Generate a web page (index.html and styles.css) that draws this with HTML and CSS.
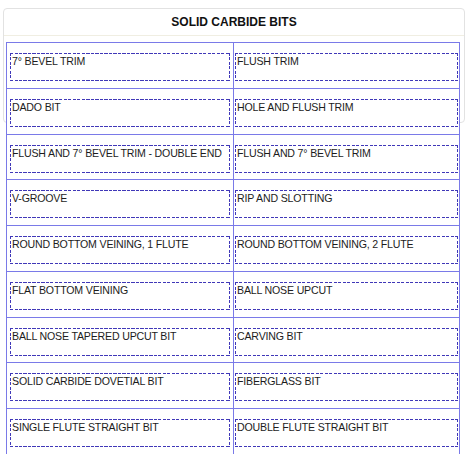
FILE: index.html
```html
<!DOCTYPE html>
<html>
<head>
<meta charset="utf-8">
<link rel="stylesheet" href="styles.css">
</head>
<body>
<div class="card">
  <div class="card-header">SOLID CARBIDE BITS</div>
  <div class="grid">
    <div class="cell left"><div class="box">7° BEVEL TRIM</div></div>
    <div class="cell right"><div class="box">FLUSH TRIM</div></div>
    <div class="cell left"><div class="box">DADO BIT</div></div>
    <div class="cell right"><div class="box">HOLE AND FLUSH TRIM</div></div>
    <div class="cell left"><div class="box">FLUSH AND 7° BEVEL TRIM - DOUBLE END</div></div>
    <div class="cell right"><div class="box">FLUSH AND 7° BEVEL TRIM</div></div>
    <div class="cell left"><div class="box">V-GROOVE</div></div>
    <div class="cell right"><div class="box">RIP AND SLOTTING</div></div>
    <div class="cell left"><div class="box">ROUND BOTTOM VEINING, 1 FLUTE</div></div>
    <div class="cell right"><div class="box">ROUND BOTTOM VEINING, 2 FLUTE</div></div>
    <div class="cell left"><div class="box">FLAT BOTTOM VEINING</div></div>
    <div class="cell right"><div class="box">BALL NOSE UPCUT</div></div>
    <div class="cell left"><div class="box">BALL NOSE TAPERED UPCUT BIT</div></div>
    <div class="cell right"><div class="box">CARVING BIT</div></div>
    <div class="cell left"><div class="box">SOLID CARBIDE DOVETIAL BIT</div></div>
    <div class="cell right"><div class="box">FIBERGLASS BIT</div></div>
    <div class="cell left"><div class="box">SINGLE FLUTE STRAIGHT BIT</div></div>
    <div class="cell right"><div class="box">DOUBLE FLUTE STRAIGHT BIT</div></div>
  </div>
</div>
</body>
</html>
```

FILE: styles.css
```css
html, body {
  margin: 0;
  padding: 0;
  background: #ffffff;
}
body {
  padding: 8px 0 0 3px;
  font-family: "Liberation Sans", Arial, sans-serif;
  color: #222222;
}
.card {
  position: relative;
  box-sizing: border-box;
  width: 462px;
  padding: 1px;
}
.card::before {
  content: "";
  position: absolute;
  left: 0;
  top: 0;
  width: 462px;
  height: 115px;
  box-sizing: border-box;
  border: 1px solid #e2e2e2;
  border-radius: 4px;
  pointer-events: none;
}
.card-header {
  position: relative;
  box-sizing: border-box;
  height: 27px;
  border-bottom: 1px solid #f0eee2;
  text-align: center;
  font-weight: bold;
  font-size: 12px;
  line-height: 26px;
  color: #111111;
}
.grid {
  position: relative;
  margin: 6px 0 0 2px;
  width: 454px;
  box-sizing: border-box;
  display: grid;
  grid-template-columns: 227px 226px;
  grid-auto-rows: 45.75px;
  border-left: 1px solid #7a7ae8;
  border-right: 1px solid #7a7ae8;
  background: #ffffff;
}
.cell {
  box-sizing: border-box;
  border-top: 1px solid #7a7ae8;
  padding: 10px 3px 0 3px;
}
.cell.left {
  border-right: 1px solid #7a7ae8;
}
.cell.right {
  padding: 10px 2px 0 1px;
}
.box {
  box-sizing: border-box;
  height: 28px;
  padding: 2px 0 0 2px;
  font-size: 10.6px;
  letter-spacing: -0.18px;
  line-height: 13px;
  color: #1c1c1c;
  white-space: nowrap;
  background:
    repeating-linear-gradient(90deg, #4038b8 0 3px, transparent 3px 4.5px) left top / 100% 1px no-repeat,
    repeating-linear-gradient(90deg, #4038b8 0 3px, transparent 3px 4.5px) left bottom / 100% 1px no-repeat,
    repeating-linear-gradient(180deg, #4038b8 0 3px, transparent 3px 4.5px) left top / 1px 100% no-repeat,
    repeating-linear-gradient(180deg, #4038b8 0 3px, transparent 3px 4.5px) right top / 1px 100% no-repeat;
}
```
